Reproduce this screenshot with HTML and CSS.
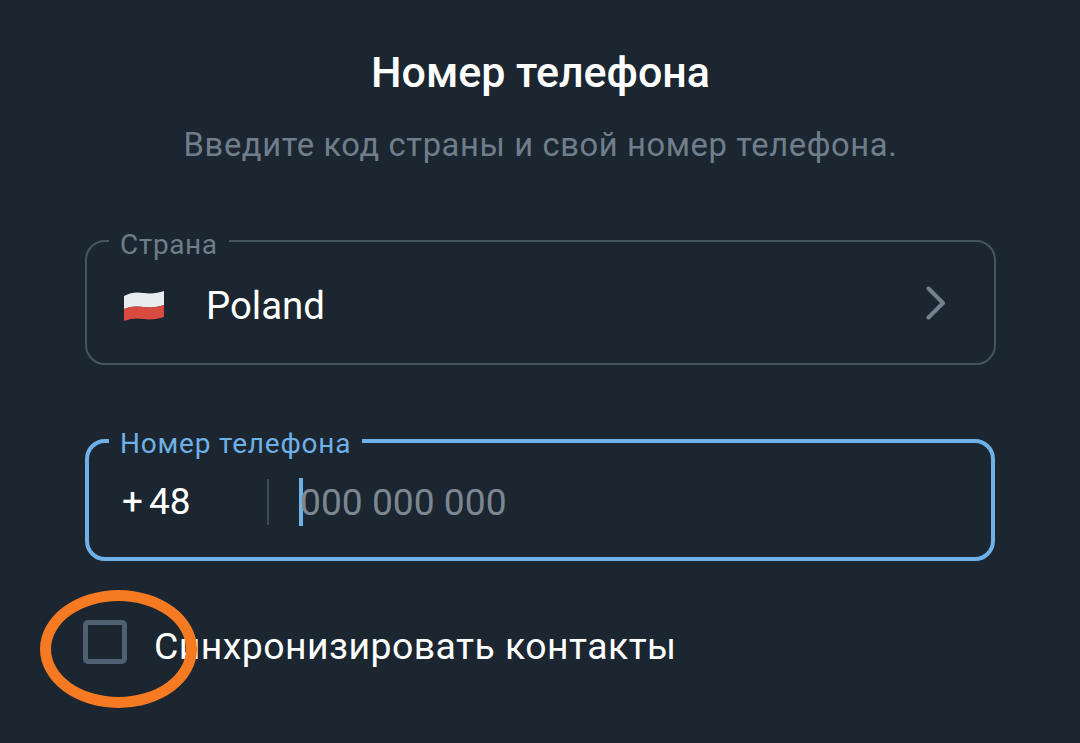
FILE: index.html
```html
<!DOCTYPE html>
<html lang="ru">
<head>
<meta charset="utf-8">
<title>Номер телефона</title>
<link rel="stylesheet" href="styles.css">
</head>
<body>
<main class="screen">
  <h1 class="title">Номер телефона</h1>
  <p class="subtitle">Введите код страны и свой номер телефона.</p>

  <fieldset class="field country">
    <legend class="legend">Страна</legend>
    <div class="row">
      <svg class="flag" viewBox="0 0 42 32" aria-hidden="true">
        <path d="M1 6 C8 2 14 2 21 3 C28 4 35 3 41 1 V15 C35 17 28 18 21 17 C14 16 8 16 1 19 Z" fill="#e9ebee"/>
        <path d="M1 19 C8 16 14 16 21 17 C28 18 35 17 41 15 V27 C35 29 28 30 21 29 C14 28 8 28 1 31 Z" fill="#d94a40"/>
      </svg>
      <span class="value">Poland</span>
      <svg class="chevron" viewBox="0 0 20 34" aria-hidden="true">
        <path d="M2.5 2.5 L17 17 L2.5 31.5" fill="none" stroke="#74818e" stroke-width="4" stroke-linecap="round" stroke-linejoin="round"/>
      </svg>
    </div>
  </fieldset>

  <fieldset class="field phone">
    <legend class="legend legend-active">Номер телефона</legend>
    <div class="row phone-row">
      <span class="code"><span class="plus">+</span>48</span>
      <span class="divider"></span>
      <span class="caret"></span>
      <span class="placeholder">000 000 000</span>
    </div>
  </fieldset>

  <label class="sync">
    <span class="checkbox"></span>
    <span class="sync-text">Синхронизировать контакты</span>
  </label>
</main>
<div class="annotation"></div>
</body>
</html>
```
FILE: styles.css
```css
* { box-sizing: border-box; }
html, body { margin: 0; height: 100%; }
body {
  background: #1b2631;
  font-family: Roboto, "Noto Sans", sans-serif;
  color: #fff;
  overflow: hidden;
  position: relative;
}
.screen {
  display: flex;
  flex-direction: column;
  padding: 47px 84px 0 85px;
}
.title {
  margin: 0;
  text-align: center;
  font-size: 43px;
  line-height: 50px;
  font-weight: 500;
}
.subtitle {
  margin: 28px 0 0;
  text-align: center;
  font-size: 32.7px;
  line-height: 40px;
  letter-spacing: 0.62px;
  color: #707e8b;
}
.field {
  margin: 0;
  min-width: 0;
  border-radius: 20px;
  padding: 0 0 0 24px;
}
.legend {
  font-size: 28px;
  line-height: 30px;
  letter-spacing: 0.6px;
}
.country {
  margin-top: 57px;
  height: 143px;
  border: 2px solid #47555f;
}
.country .legend {
  color: #6f7d8a;
  padding: 8px 11px 0;
  margin-left: -2px;
}
.phone {
  margin-top: 58px;
  margin-right: 1px;
  height: 138px;
  border: 4px solid #6fb0e6;
}
.legend-active {
  color: #6fb0e6;
  padding: 6px 11px 0;
  margin-left: -4px;
  letter-spacing: 0.8px;
}
.row {
  display: flex;
  align-items: center;
}
.country .row { padding: 24px 48px 0 12px; }
.flag { width: 42px; height: 32px; flex: none; }
.value {
  margin-left: 41px;
  font-size: 38.4px;
  line-height: 44px;
  flex: 1;
}
.chevron { width: 20px; height: 34px; flex: none; margin-bottom: 6px; }
.phone-row { padding: 19px 0 0 9px; }
.code {
  width: 145px;
  font-size: 37px;
  line-height: 44px;
}
.plus { letter-spacing: 6px; }
.divider {
  width: 2px;
  height: 46px;
  background: #3f4c58;
  flex: none;
}
.caret {
  width: 4px;
  height: 48px;
  margin-left: 30px;
  background: #6fb0e6;
  flex: none;
}
.placeholder {
  font-size: 37.2px;
  line-height: 44px;
  color: #7d8791;
  margin-left: -3px;
}
.sync {
  display: flex;
  align-items: center;
  margin-top: 59px;
  margin-left: -2px;
}
.checkbox {
  width: 44px;
  height: 44px;
  border: 5px solid #4f6073;
  border-radius: 5px;
  flex: none;
  margin-bottom: 8px;
}
.sync-text {
  margin-left: 27px;
  font-size: 37.4px;
  line-height: 44px;
  letter-spacing: 0.45px;
}
.annotation {
  position: absolute;
  left: 40px;
  top: 590px;
  width: 157px;
  height: 118px;
  border: 11px solid #f57a22;
  border-radius: 50%;
}
```
